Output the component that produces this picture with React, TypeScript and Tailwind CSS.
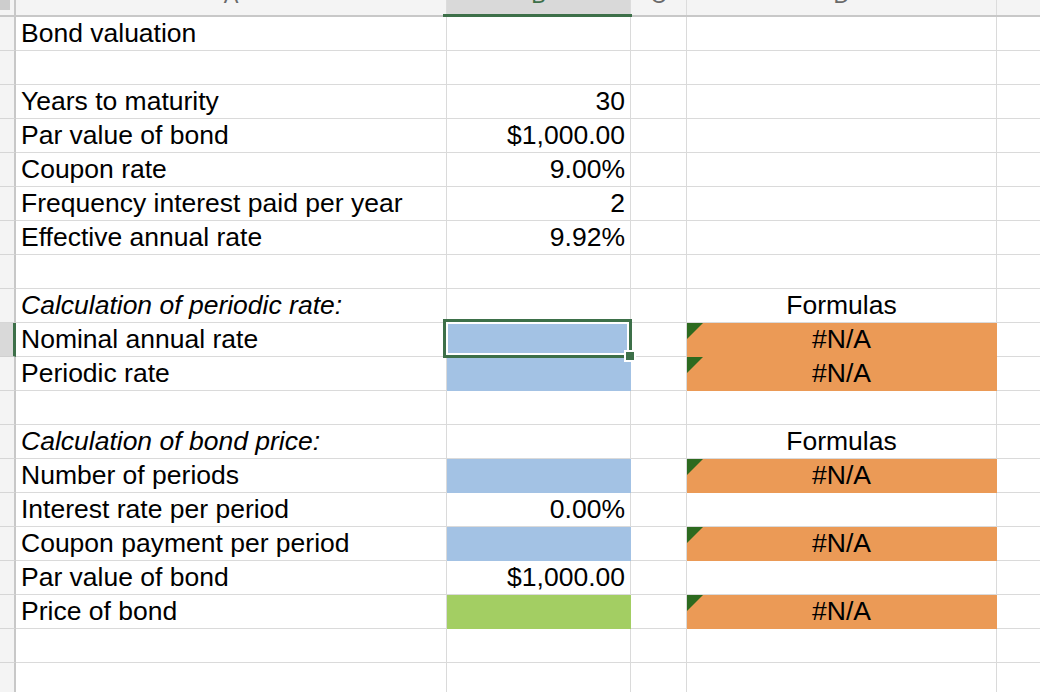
import React from "react";

type Fill = "blue" | "orange" | "green";

type Cell = {
    text?: string;
    italic?: boolean;
    fill?: Fill;
    flag?: boolean;
};

type Row = {
    a?: Cell;
    b?: Cell;
    d?: Cell;
    selected?: boolean;
};

const rows: Row[] = [
    { a: { text: "Bond valuation" } },
    {},
    { a: { text: "Years to maturity" }, b: { text: "30" } },
    { a: { text: "Par value of bond" }, b: { text: "$1,000.00" } },
    { a: { text: "Coupon rate" }, b: { text: "9.00%" } },
    { a: { text: "Frequency interest paid per year" }, b: { text: "2" } },
    { a: { text: "Effective annual rate" }, b: { text: "9.92%" } },
    {},
    { a: { text: "Calculation of periodic rate:", italic: true }, d: { text: "Formulas" } },
    {
        a: { text: "Nominal annual rate" },
        b: { fill: "blue" },
        d: { text: "#N/A", fill: "orange", flag: true },
        selected: true,
    },
    { a: { text: "Periodic rate" }, b: { fill: "blue" }, d: { text: "#N/A", fill: "orange", flag: true } },
    {},
    { a: { text: "Calculation of bond price:", italic: true }, d: { text: "Formulas" } },
    { a: { text: "Number of periods" }, b: { fill: "blue" }, d: { text: "#N/A", fill: "orange", flag: true } },
    { a: { text: "Interest rate per period" }, b: { text: "0.00%" } },
    { a: { text: "Coupon payment per period" }, b: { fill: "blue" }, d: { text: "#N/A", fill: "orange", flag: true } },
    { a: { text: "Par value of bond" }, b: { text: "$1,000.00" } },
    { a: { text: "Price of bond" }, b: { fill: "green" }, d: { text: "#N/A", fill: "orange", flag: true } },
    {},
    {},
];

const fillClass = (fill?: Fill) => {
    if (fill === "blue") return "bg-[#a3c2e4] border-[#a3c2e4]";
    if (fill === "orange") return "bg-[#eb9a56] border-[#eb9a56]";
    if (fill === "green") return "bg-[#a3ce63] border-[#a3ce63]";
    return "bg-white border-[#dadada]";
};

const ErrorFlag = () => (
    <svg className="absolute left-0 top-0" width="16" height="16" viewBox="0 0 16 16">
        <polygon points="0,0 16,0 0,16" fill="#2d6a1f" />
    </svg>
);

const App: React.FC = () => {
    return (
        <div
            className="w-[1040px] h-[692px] overflow-hidden bg-white text-black"
            style={{ fontFamily: '"Liberation Sans", Arial, sans-serif' }}
        >
            <div className="flex h-[17px] bg-[#f4f4f4] border-b-2 border-[#c8c8c8]">
                <div className="relative w-[16px] shrink-0 border-r-2 border-[#c8c8c8]">
                    <div className="absolute left-0 top-0 w-[10px] h-[10px] bg-[#cdcdcd]" />
                </div>
                <div className="w-[431px] shrink-0 border-r border-[#dcdcdc] flex justify-center overflow-hidden">
                    <span className="text-[22px] leading-none -mt-[15px] text-[#6a6a6a]">A</span>
                </div>
                <div className="w-[184px] shrink-0 border-r border-[#dcdcdc] bg-[#d9d9d9] flex justify-center overflow-hidden">
                    <span className="text-[22px] leading-none -mt-[15px] text-[#3d7049]">B</span>
                </div>
                <div className="w-[56px] shrink-0 border-r border-[#dcdcdc] flex justify-center overflow-hidden">
                    <span className="text-[22px] leading-none -mt-[15px] text-[#6a6a6a]">C</span>
                </div>
                <div className="w-[310px] shrink-0 border-r border-[#dcdcdc] flex justify-center overflow-hidden">
                    <span className="text-[22px] leading-none -mt-[15px] text-[#6a6a6a]">D</span>
                </div>
                <div className="flex-1" />
            </div>
            <div className="relative">
                <div className="absolute left-[443px] -top-[3px] w-[189px] h-[3px] bg-[#3d7049]" />
            </div>

            {rows.map((row, i) => (
                <div key={i} className="flex h-[34px] text-[26.5px]">
                    <div
                        className={
                            row.selected
                                ? "w-[16px] shrink-0 bg-[#d9d9d9] border-b border-[#d0d0d0] border-r-[3px] border-r-[#3d7049]"
                                : "w-[16px] shrink-0 bg-[#f4f4f4] border-b border-[#d6d6d6] border-r-2 border-r-[#c8c8c8]"
                        }
                    />
                    <div
                        className={
                            "w-[431px] shrink-0 border-r border-b border-[#dadada] pl-[5px] leading-[33px] whitespace-nowrap " +
                            (row.a?.italic ? "italic" : "")
                        }
                    >
                        {row.a?.text}
                    </div>
                    <div
                        className={
                            "relative w-[184px] shrink-0 border-r border-b text-right pr-[5px] leading-[33px] " +
                            fillClass(row.b?.fill)
                        }
                    >
                        {row.b?.text}
                        {row.selected && (
                            <>
                                <div className="absolute -left-[4px] -top-[4px] -right-[2px] -bottom-[2px] border-[3px] border-[#3d7049] z-10">
                                    <div className="absolute inset-0 border-2 border-white" />
                                </div>
                                <div className="absolute -right-[6px] -bottom-[6px] w-[12px] h-[12px] bg-[#3d7049] border-2 border-white z-20" />
                            </>
                        )}
                    </div>
                    <div className="w-[56px] shrink-0 border-r border-b border-[#dadada]" />
                    <div
                        className={
                            "relative w-[310px] shrink-0 border-r border-b text-center leading-[33px] " +
                            fillClass(row.d?.fill)
                        }
                    >
                        {row.d?.flag && <ErrorFlag />}
                        {row.d?.text}
                    </div>
                    <div className="flex-1 border-b border-[#dadada]" />
                </div>
            ))}
        </div>
    );
};

export default App;
